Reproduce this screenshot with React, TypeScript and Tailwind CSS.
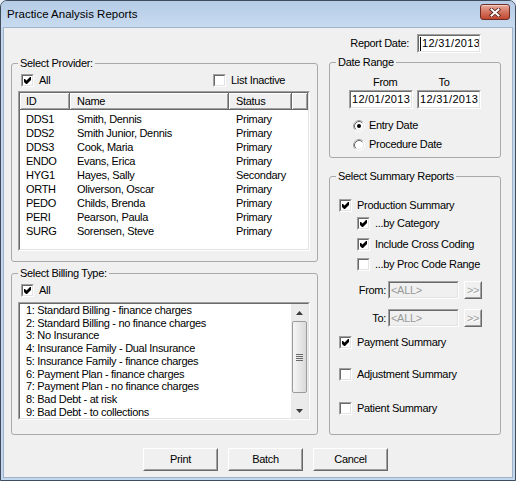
import React from "react";

// ── Data ──────────────────────────────────────────────────────────────────────

const PROVIDERS = [
  { id: "DDS1", name: "Smith, Dennis", status: "Primary" },
  { id: "DDS2", name: "Smith Junior, Dennis", status: "Primary" },
  { id: "DDS3", name: "Cook, Maria", status: "Primary" },
  { id: "ENDO", name: "Evans, Erica", status: "Primary" },
  { id: "HYG1", name: "Hayes, Sally", status: "Secondary" },
  { id: "ORTH", name: "Oliverson, Oscar", status: "Primary" },
  { id: "PEDO", name: "Childs, Brenda", status: "Primary" },
  { id: "PERI", name: "Pearson, Paula", status: "Primary" },
  { id: "SURG", name: "Sorensen, Steve", status: "Primary" },
];

const BILLING_TYPES = [
  "1: Standard Billing - finance charges",
  "2: Standard Billing - no finance charges",
  "3: No Insurance",
  "4: Insurance Family - Dual Insurance",
  "5: Insurance Family - finance charges",
  "6: Payment Plan - finance charges",
  "7: Payment Plan - no finance charges",
  "8: Bad Debt - at risk",
  "9: Bad Debt - to collections",
];

// ── Classic controls ──────────────────────────────────────────────────────────

function Sunken({
  className = "",
  inner = "bg-white",
  children,
}: {
  className?: string;
  inner?: string;
  children?: React.ReactNode;
}) {
  return (
    <div
      className={`flex border border-t-[#a0a0a0] border-l-[#a0a0a0] border-r-white border-b-white ${className}`}
    >
      <div
        className={`flex min-w-0 flex-1 overflow-hidden border border-t-[#696969] border-l-[#696969] border-r-[#e3e3e3] border-b-[#e3e3e3] ${inner}`}
      >
        {children}
      </div>
    </div>
  );
}

function Raised({ className = "", children }: { className?: string; children?: React.ReactNode }) {
  return (
    <div
      className={`flex border border-t-white border-l-white border-r-[#696969] border-b-[#696969] bg-[#f0f0f0] ${className}`}
    >
      <div className="flex flex-1 items-center justify-center border border-t-[#f0f0f0] border-l-[#f0f0f0] border-r-[#a0a0a0] border-b-[#a0a0a0]">
        {children}
      </div>
    </div>
  );
}

function Check({ checked }: { checked?: boolean }) {
  return (
    <span className="flex h-[13px] w-[13px] shrink-0 border border-t-[#a0a0a0] border-l-[#a0a0a0] border-r-white border-b-white">
      <span className="flex flex-1 items-center justify-center border border-t-[#696969] border-l-[#696969] border-r-[#e3e3e3] border-b-[#e3e3e3] bg-white">
        {checked && (
          <svg width="9" height="9" viewBox="0 0 9 9" aria-hidden="true">
            <polygon points="1,3 2,3 3.5,4.6 7,1 8,1 8,4 4,8 3,8 1,6" fill="#000" />
          </svg>
        )}
      </span>
    </span>
  );
}

function CheckRow({
  label,
  checked,
  className = "",
}: {
  label: string;
  checked?: boolean;
  className?: string;
}) {
  return (
    <div className={`flex h-[13px] items-center gap-[5px] ${className}`}>
      <Check checked={checked} />
      <span className="whitespace-nowrap">{label}</span>
    </div>
  );
}

function RadioRow({ label, on, className = "" }: { label: string; on?: boolean; className?: string }) {
  return (
    <div className={`flex h-[13px] items-center gap-[4px] ${className}`}>
      <svg width="12" height="12" viewBox="0 0 12 12" className="shrink-0" aria-hidden="true">
        <circle cx="6" cy="6" r="5.5" fill="#fff" stroke="#fff" />
        <path d="M2.11 9.89 A5.5 5.5 0 0 1 9.89 2.11" fill="none" stroke="#a0a0a0" />
        <circle cx="6" cy="6" r="4.5" fill="#fff" stroke="#e3e3e3" />
        <path d="M2.82 9.18 A4.5 4.5 0 0 1 9.18 2.82" fill="none" stroke="#696969" />
        {on && <circle cx="6" cy="6" r="2" fill="#000" />}
      </svg>
      <span className="whitespace-nowrap">{label}</span>
    </div>
  );
}

function DateBox({ value, caret, className = "" }: { value: string; caret?: boolean; className?: string }) {
  return (
    <Sunken className={`h-[19px] w-[64px] ${className}`} inner="items-center bg-white pl-[1px] tracking-[0.3px]">
      {caret && <span className="mr-px h-[14px] w-px shrink-0 bg-black" />}
      <span>{value}</span>
    </Sunken>
  );
}

function RangeRow({ label, className = "" }: { label: string; className?: string }) {
  return (
    <div className={`flex h-[18px] items-center ${className}`}>
      <span className="w-[50px] text-right">{label}</span>
      <Sunken className="ml-[2px] h-[18px] w-[71px]" inner="items-center bg-[#f0f0f0] pl-[1px] text-[#9a9a9a]">
        &lt;ALL&gt;
      </Sunken>
      <Raised className="ml-[5px] h-[18px] w-[18px]">
        <span className="text-[#a0a0a0] [text-shadow:1px_1px_0_#fff]">&gt;&gt;</span>
      </Raised>
    </div>
  );
}

function GroupBox({
  title,
  className = "",
  children,
}: {
  title: string;
  className?: string;
  children?: React.ReactNode;
}) {
  return (
    <fieldset className={`rounded-[3px] border border-[#a9a9a9] px-[6px] ${className}`}>
      <legend className="px-[2px]">{title}</legend>
      {children}
    </fieldset>
  );
}

function VScroll() {
  return (
    <div className="flex w-[17px] shrink-0 flex-col bg-[#ebebeb]">
      <div className="flex h-[17px] items-center justify-center">
        <svg width="7" height="4" viewBox="0 0 7 4" aria-hidden="true">
          <polygon points="0,4 3.5,0 7,4" fill="#3c3c3c" />
        </svg>
      </div>
      <div className="mx-[1px] flex h-[72px] items-center justify-center rounded-[2px] border border-[#9b9b9b] bg-gradient-to-r from-[#f6f6f6] to-[#dadada]">
        <div className="flex flex-col gap-[1px]">
          <span className="h-px w-[7px] bg-[#6a6a6a]" />
          <span className="h-px w-[7px] bg-[#6a6a6a]" />
          <span className="h-px w-[7px] bg-[#6a6a6a]" />
          <span className="h-px w-[7px] bg-[#6a6a6a]" />
        </div>
      </div>
      <div className="flex-1" />
      <div className="flex h-[17px] items-center justify-center pt-[2px]">
        <svg width="7" height="4" viewBox="0 0 7 4" aria-hidden="true">
          <polygon points="0,0 7,0 3.5,4" fill="#3c3c3c" />
        </svg>
      </div>
    </div>
  );
}

// ── Provider list ─────────────────────────────────────────────────────────────

const HEAD =
  "flex h-[17px] items-center border-r border-b border-r-[#696969] border-b-[#696969] bg-[#f0f0f0] shadow-[inset_1px_1px_0_#fff,inset_-1px_-1px_0_#a0a0a0]";

function ProviderList() {
  return (
    <Sunken className="mt-[4px] h-[160px] w-[292px]" inner="flex-col bg-white">
      <div className="flex shrink-0">
        <div className={`${HEAD} w-[50px] pl-[6px]`}>ID</div>
        <div className={`${HEAD} w-[159px] pl-[7px]`}>Name</div>
        <div className={`${HEAD} w-[63px] pl-[7px]`}>Status</div>
        <div className={`${HEAD} flex-1`} />
      </div>
      <div className="pt-[2px]">
        {PROVIDERS.map((p) => (
          <div key={p.id} className="flex h-[14px] items-center whitespace-nowrap">
            <span className="w-[50px] pl-[6px]">{p.id}</span>
            <span className="w-[159px] pl-[7px]">{p.name}</span>
            <span className="w-[63px] pl-[7px]">{p.status}</span>
          </div>
        ))}
      </div>
    </Sunken>
  );
}

// ── Window ────────────────────────────────────────────────────────────────────

function CloseButton() {
  return (
    <div className="mr-[5px] mt-[3px] flex h-[16px] w-[30px] items-center justify-center rounded-[3px] border border-[#6e2c22] bg-gradient-to-b from-[#e8aa9c] via-[#d2735f] to-[#c2472f] shadow-[inset_0_1px_0_#f3cfc6]">
      <svg width="12" height="9" viewBox="0 0 12 9" aria-hidden="true">
        <path d="M2.5 1.5 L9.5 7.5 M9.5 1.5 L2.5 7.5" stroke="#4d1a12" strokeWidth="3.6" strokeLinecap="square" />
        <path d="M2.5 1.5 L9.5 7.5 M9.5 1.5 L2.5 7.5" stroke="#fff" strokeWidth="2" strokeLinecap="square" />
      </svg>
    </div>
  );
}

export default function App() {
  return (
    <div className="h-[481px] w-[516px] overflow-hidden bg-[#e4ecf5] font-['Liberation_Sans',Arial,sans-serif] text-[11px] leading-[13px] tracking-[-0.3px] text-black">
      <div className="flex h-full flex-col rounded-t-[7px] border border-[#3e4c5e] bg-[#c2d6ec] px-[3px] pb-[3px]">
        {/* Title bar */}
        <div className="-mx-[3px] flex h-[27px] shrink-0 items-start justify-between rounded-t-[6px] bg-gradient-to-b from-[#b5cce6] to-[#c8dbf0]">
          <span className="ml-[6px] mt-[6px] text-[11.5px] leading-[14px] tracking-normal">
            Practice Analysis Reports
          </span>
          <CloseButton />
        </div>

        {/* Client area */}
        <div className="flex flex-1 flex-col bg-[#f0f0f0] shadow-[0_0_0_1px_#9fb3ca]">
          <div className="flex shrink-0 items-center justify-end gap-[8px] pr-[31px] pt-[6px]">
            <span>Report Date:</span>
            <DateBox value="12/31/2013" caret />
          </div>

          <div className="mt-[3px] flex items-start pl-[7px]">
            {/* Left column */}
            <div className="flex w-[307px] flex-col pt-[1px]">
              <GroupBox title="Select Provider:" className="h-[205px]">
                <div className="mt-[4px] flex h-[13px] items-center">
                  <CheckRow checked label="All" className="ml-[3px] w-[192px] shrink-0" />
                  <CheckRow label="List Inactive" />
                </div>
                <ProviderList />
              </GroupBox>

              <GroupBox title="Select Billing Type:" className="mt-[5px] h-[168px]">
                <CheckRow checked label="All" className="ml-[3px] mt-[4px]" />
                <Sunken className="mt-[5px] h-[118px] w-[292px]" inner="bg-white">
                  <div className="min-w-0 flex-1 overflow-hidden">
                    {BILLING_TYPES.map((b) => (
                      <div key={b} className="flex h-[12.75px] items-center whitespace-nowrap pl-[6px]">
                        {b}
                      </div>
                    ))}
                  </div>
                  <VScroll />
                </Sunken>
              </GroupBox>
            </div>

            {/* Right column */}
            <div className="ml-[11px] flex w-[172px] flex-col">
              <GroupBox title="Date Range" className="h-[102px]">
                <div className="mt-[7px] flex h-[13px]">
                  <span className="ml-[37px]">From</span>
                  <span className="ml-[41px]">To</span>
                </div>
                <div className="ml-[13px] mt-[1px] flex gap-[4px]">
                  <DateBox value="12/01/2013" />
                  <DateBox value="12/31/2013" />
                </div>
                <RadioRow on label="Entry Date" className="ml-[17px] mt-[10px]" />
                <RadioRow label="Procedure Date" className="ml-[17px] mt-[6px]" />
              </GroupBox>

              <GroupBox title="Select Summary Reports" className="mt-[12px] h-[265px]">
                <CheckRow checked label="Production Summary" className="ml-[3px] mt-[16px]" />
                <CheckRow checked label="...by Category" className="ml-[21px] mt-[5px]" />
                <CheckRow checked label="Include Cross Coding" className="ml-[21px] mt-[8px]" />
                <CheckRow label="...by Proc Code Range" className="ml-[21px] mt-[7px]" />
                <RangeRow label="From:" className="mt-[10px]" />
                <RangeRow label="To:" className="mt-[10px]" />
                <CheckRow checked label="Payment Summary" className="ml-[3px] mt-[9px]" />
                <CheckRow label="Adjustment Summary" className="ml-[3px] mt-[19px]" />
                <CheckRow label="Patient Summary" className="ml-[3px] mt-[21px]" />
              </GroupBox>
            </div>
          </div>

          {/* Buttons */}
          <div className="mt-[13px] flex gap-[10px] pl-[139px]">
            <Raised className="h-[23px] w-[75px]">Print</Raised>
            <Raised className="h-[23px] w-[75px]">Batch</Raised>
            <Raised className="h-[23px] w-[75px]">Cancel</Raised>
          </div>
        </div>
      </div>
    </div>
  );
}
